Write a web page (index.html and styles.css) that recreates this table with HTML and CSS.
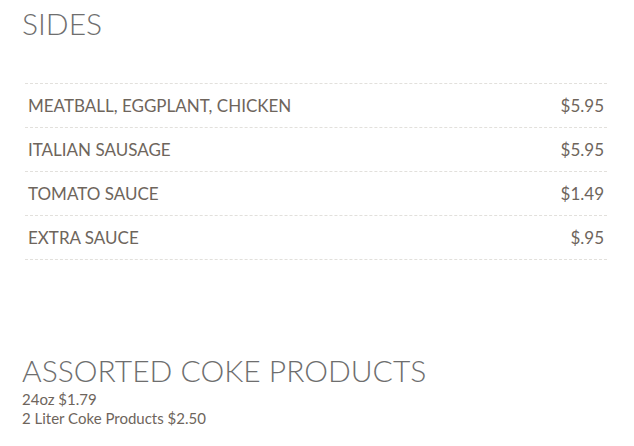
FILE: index.html
```html
<!DOCTYPE html>
<html lang="en">
<head>
    <meta charset="UTF-8">
    <title>Menu</title>
    <link rel="stylesheet" href="styles.css">
</head>
<body>
    <div class="menu">
        <div class="section">
            <h2 class="section-title">SIDES</h2>
            <ul class="items">
                <li><span class="name">MEATBALL, EGGPLANT, CHICKEN</span><span class="price">$5.95</span></li>
                <li><span class="name">ITALIAN SAUSAGE</span><span class="price">$5.95</span></li>
                <li><span class="name">TOMATO SAUCE</span><span class="price">$1.49</span></li>
                <li><span class="name">EXTRA SAUCE</span><span class="price">$.95</span></li>
            </ul>
        </div>

        <div class="section drinks">
            <h2 class="section-title">ASSORTED COKE PRODUCTS</h2>
            <p class="note">24oz $1.79<br>2 Liter Coke Products $2.50</p>
        </div>
    </div>
</body>
</html>
```

FILE: styles.css
```css
*{
    margin: 0px;
    padding: 0px;
}

body{
    background: #fff;
    font-family: Lato, "Open Sans", sans-serif;
}

.menu{
    padding: 5px 27px 0 22px;
}

.section-title{
    font-weight: 300;
    font-size: 30px;
    line-height: 36px;
    color: #6e6e6e;
}

.items{
    list-style: none;
    margin: 42px 0 0 3px;
    border-top: 1px dashed #e2e0dc;
}

.items li{
    display: flex;
    justify-content: space-between;
    align-items: center;
    height: 43px;
    padding: 0 3px;
    border-bottom: 1px dashed #e2e0dc;
    font-size: 17px;
    color: #6e655c;
}

.drinks{
    margin-top: 92px;
}

.note{
    margin-top: 2px;
    font-size: 15px;
    line-height: 19px;
    color: #6e655c;
}
```
